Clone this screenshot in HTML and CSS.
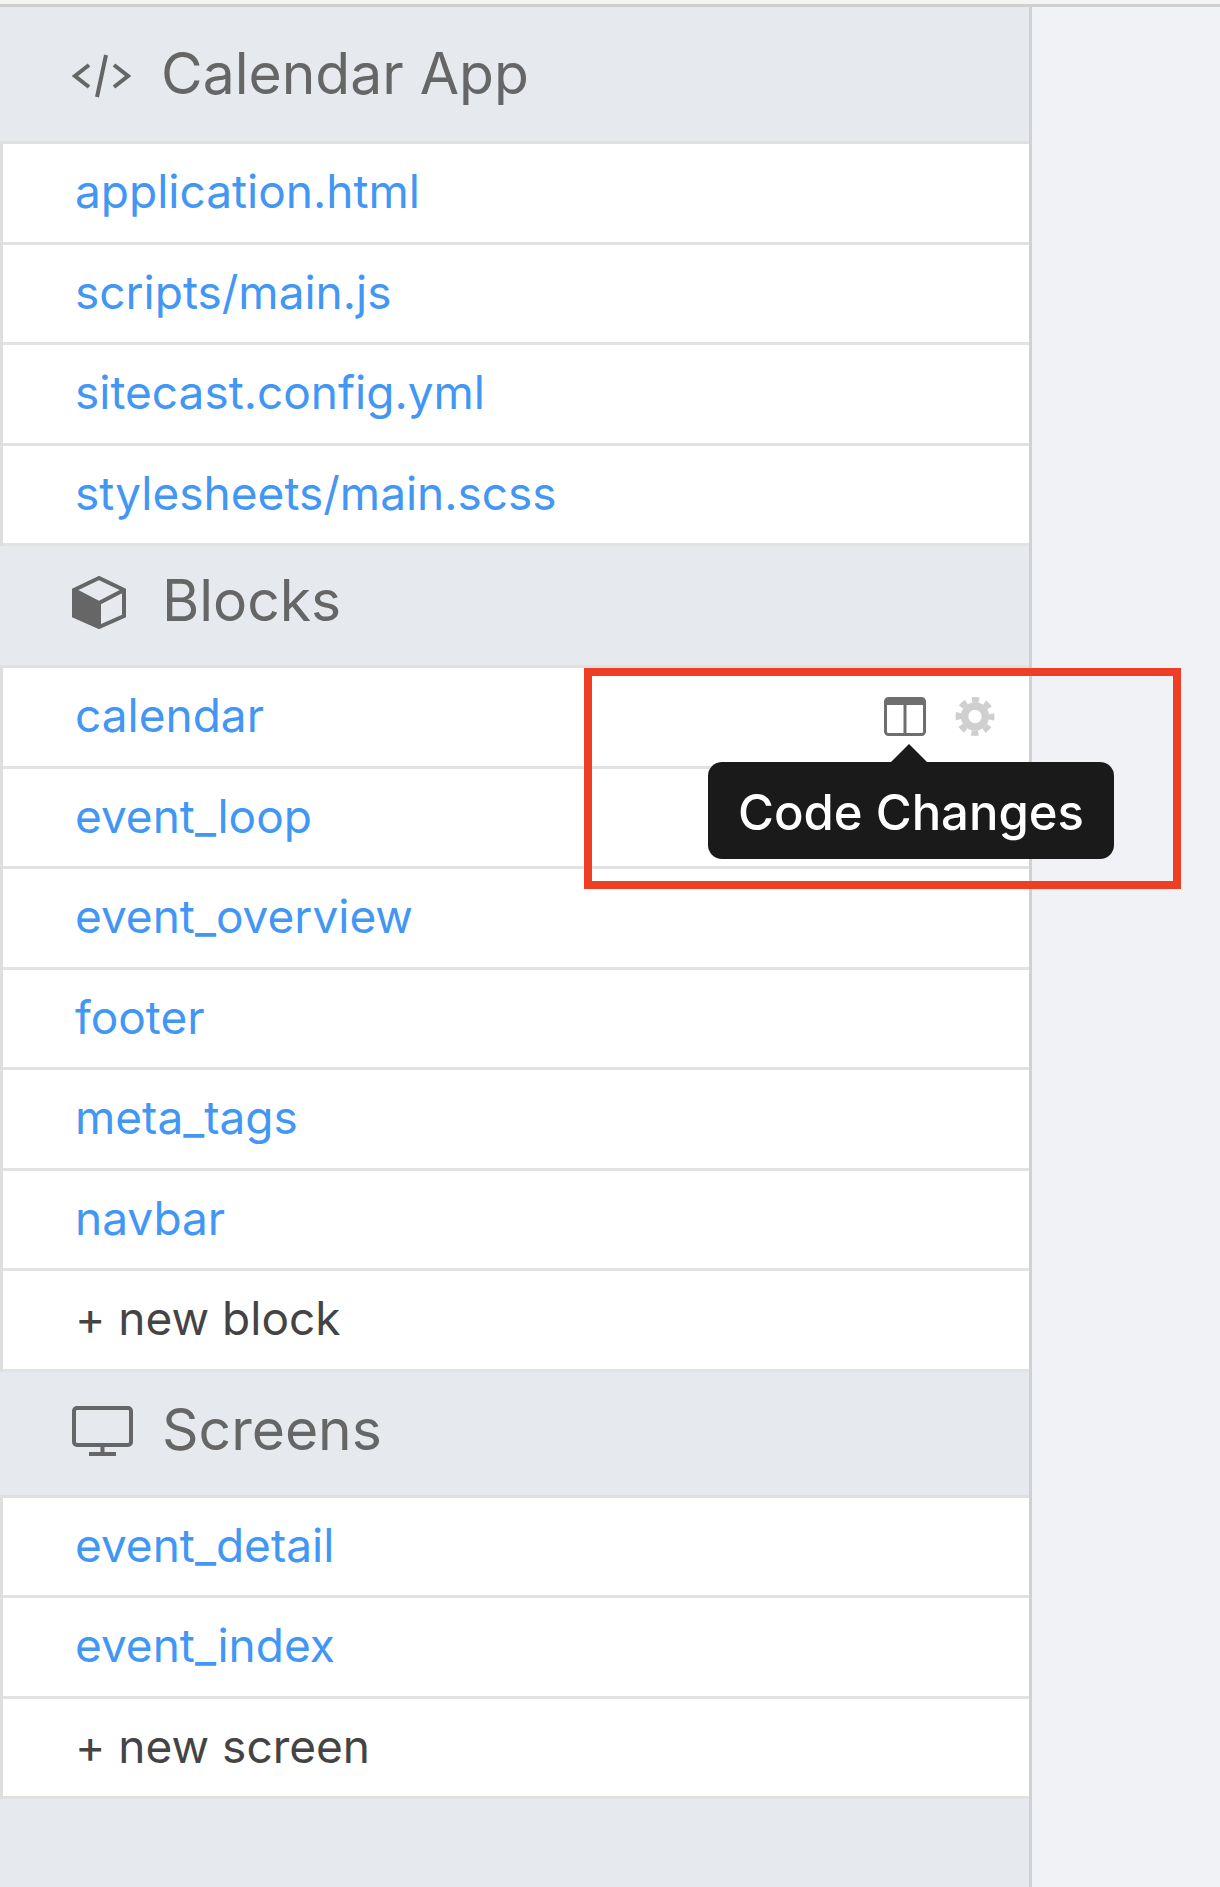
FILE: index.html
```html
<!DOCTYPE html>
<html lang="en">
<head>
    <meta charset="UTF-8">
    <title>Calendar App</title>
    <link rel="stylesheet" href="styles.css">
</head>
<body>
    <div class="topline"></div>
    <div class="sidebar">
        <div class="section-head head-app">
            <svg class="icon icon-code" viewBox="0 0 59 44"><path d="M17 11 3 22l14 11M42 11l14 11-14 11M34 1 25 43"/></svg>
            <span>Calendar App</span>
        </div>
        <ul class="list">
            <li class="row"><a href="#">application.html</a></li>
            <li class="row"><a href="#">scripts/main.js</a></li>
            <li class="row"><a href="#">sitecast.config.yml</a></li>
            <li class="row"><a href="#">stylesheets/main.scss</a></li>
        </ul>

        <div class="section-head head-blocks">
            <svg class="icon icon-cube" viewBox="0 0 54 53"><path class="solid" d="M27 27 2 14v26l25 12z"/><path d="M27 2 2 14v26l25 11 25-11V14zM2 14l25 13 25-13M27 27v24"/></svg>
            <span>Blocks</span>
        </div>
        <ul class="list">
            <li class="row">
                <a href="#">calendar</a>
                <span class="row-tools">
                    <svg class="tool tool-split" viewBox="0 0 42 39"><rect class="split-frame" x="1.5" y="1.5" width="39" height="36" rx="3"/><path class="split-top" d="M1.5 5h39"/><path class="split-line" d="M21 3v34"/></svg>
                    <svg class="tool" viewBox="0 0 24 24"><circle class="gear-ring" cx="12" cy="12" r="6.4"/><circle class="gear-teeth" cx="12" cy="12" r="10.3"/></svg>
                </span>
            </li>
            <li class="row"><a href="#">event_loop</a></li>
            <li class="row"><a href="#">event_overview</a></li>
            <li class="row"><a href="#">footer</a></li>
            <li class="row"><a href="#">meta_tags</a></li>
            <li class="row"><a href="#">navbar</a></li>
            <li class="row"><a class="add" href="#">+ new block</a></li>
        </ul>

        <div class="section-head head-screens">
            <svg class="icon icon-screen" viewBox="0 0 61 50"><rect x="2" y="2" width="57" height="37" rx="3"/><path d="M30.500 40v8M17 48h27"/></svg>
            <span>Screens</span>
        </div>
        <ul class="list">
            <li class="row"><a href="#">event_detail</a></li>
            <li class="row"><a href="#">event_index</a></li>
            <li class="row"><a class="add" href="#">+ new screen</a></li>
        </ul>
    </div>

    <div class="tooltip">Code Changes</div>
    <div class="callout"></div>
</body>
</html>
```

FILE: styles.css
```css
body {
    font-family: Inter, "Liberation Sans", sans-serif;
    background-color: #f0f2f6;
    margin: 0;
    padding: 0;
    height: 1887px;
    overflow: hidden;
    position: relative;
}
.topline {
    height: 4px;
    background: #f4f4f4;
    border-bottom: 3px solid #cfcfcf;
}
.sidebar {
    width: 1029px;
    height: 1880px;
    background: #e6e9ee;
    border-right: 3px solid #d0d1d4;
}
.section-head {
    display: flex;
    align-items: center;
    padding-left: 72px;
    box-sizing: border-box;
    font-size: 57px;
    color: #666;
    border-bottom: 3px solid #e0e0e0;
}
.head-app { height: 137px; padding-bottom: 1px; }
.head-app span { margin-left: 30px; }
.head-blocks { height: 122px; padding-bottom: 11px; }
.head-blocks span { margin-left: 36px; }
.head-screens { height: 126px; padding-bottom: 8px; }
.head-screens span { margin-left: 29px; }
.icon {
    flex: none;
    fill: none;
    stroke: #666;
    stroke-width: 4;
    margin-top: 4px;
}
.icon-code { width: 59px; height: 44px; }
.icon-cube { width: 54px; height: 53px; }
.icon-screen { width: 61px; height: 50px; }
.icon .solid {
    fill: #666;
    stroke: none;
}
.list {
    list-style: none;
    margin: 0;
    padding: 0;
    border-left: 3px solid #dedede;
}
.row {
    display: flex;
    align-items: center;
    justify-content: space-between;
    height: 100.5px;
    box-sizing: border-box;
    padding: 0 34px 3px 72px;
    background: #fff;
    border-bottom: 3px solid #e2e2e2;
    font-size: 46px;
}
.row a {
    color: #4296f4;
    text-decoration: none;
}
.row a.add {
    color: #444;
}
.row-tools {
    display: flex;
    gap: 29px;
    margin-top: 3px;
}
.tool {
    width: 40px;
    height: 39px;
}
.tool-split {
    width: 42px;
}
.split-frame, .split-line, .split-top {
    fill: none;
    stroke: #6e6e6e;
    stroke-width: 3;
}
.split-top {
    stroke-width: 6;
}
.gear-ring {
    fill: none;
    stroke: #cfcfcf;
    stroke-width: 4.6;
}
.gear-teeth {
    fill: none;
    stroke: #cfcfcf;
    stroke-width: 3.4;
    stroke-dasharray: 4.4 3.69;
    stroke-dashoffset: 2.2;
}
.tooltip {
    position: absolute;
    left: 708px;
    top: 762px;
    width: 406px;
    height: 97px;
    box-sizing: border-box;
    padding-top: 3px;
    display: flex;
    align-items: center;
    justify-content: center;
    background: #1a1a1a;
    border-radius: 14px;
    color: #fff;
    font-size: 49px;
    font-weight: 500;
}
.tooltip::before {
    content: "";
    position: absolute;
    left: 183px;
    top: -18px;
    border-left: 18px solid transparent;
    border-right: 18px solid transparent;
    border-bottom: 18px solid #1a1a1a;
}
.callout {
    position: absolute;
    left: 584px;
    top: 668px;
    width: 597px;
    height: 221px;
    box-sizing: border-box;
    border: 8px solid #ee3e24;
}
```
